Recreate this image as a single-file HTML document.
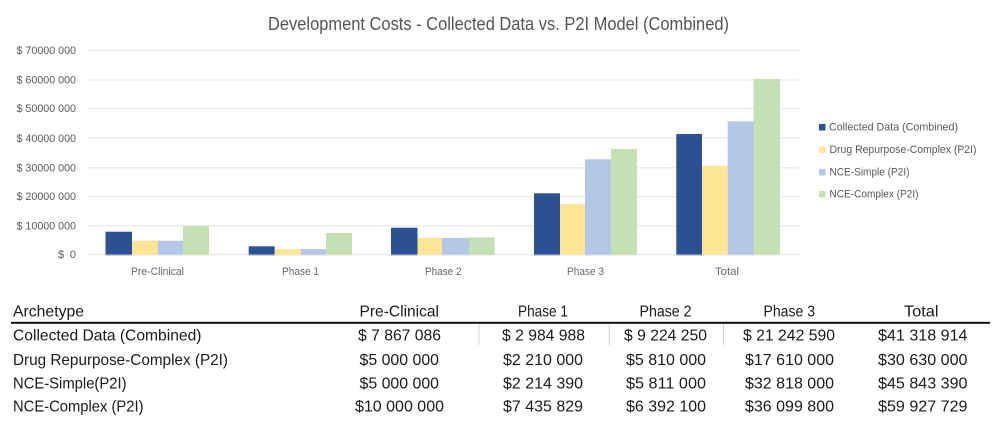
<!DOCTYPE html>
<html>
<head>
<meta charset="utf-8">
<style>
html,body{margin:0;padding:0;background:#fff;width:1000px;height:431px;overflow:hidden}
svg{display:block}
text{font-family:"Liberation Sans",sans-serif}
.t{font-size:18px;fill:#555}
.y{font-size:11px;fill:#595959}
.c{font-size:11px;fill:#666}
.l{font-size:11px;fill:#595959}
.d{font-size:16px;fill:#1a1a1a}
.b{fill:#2b5192}.a{fill:#ffe596}.s{fill:#b4c7e7}.g{fill:#c5e0b4}
</style>
</head>
<body>
<svg width="1000" height="431" viewBox="0 0 1000 431" xmlns="http://www.w3.org/2000/svg">
<text class="t" x="268" y="30" textLength="461" lengthAdjust="spacingAndGlyphs">Development Costs - Collected Data vs. P2I Model (Combined)</text>

<g fill="#e8e8e8">
<rect x="87" y="50" width="712" height="1.2"/>
<rect x="87" y="79.5" width="712" height="1.2"/>
<rect x="87" y="108" width="712" height="1.2"/>
<rect x="87" y="137.2" width="712" height="1.2"/>
<rect x="87" y="167.2" width="712" height="1.2"/>
<rect x="87" y="196" width="712" height="1.2"/>
<rect x="87" y="225.2" width="712" height="1.2"/>
<rect x="87" y="254" width="712" height="1.2"/>
</g>

<g>
<text class="y" x="16.5" y="54" textLength="59.5" lengthAdjust="spacingAndGlyphs">$ 70000 000</text>
<text class="y" x="16.5" y="83.5" textLength="59.5" lengthAdjust="spacingAndGlyphs">$ 60000 000</text>
<text class="y" x="16.5" y="112" textLength="59.5" lengthAdjust="spacingAndGlyphs">$ 50000 000</text>
<text class="y" x="16.5" y="142" textLength="59.5" lengthAdjust="spacingAndGlyphs">$ 40000 000</text>
<text class="y" x="16.5" y="171.5" textLength="59.5" lengthAdjust="spacingAndGlyphs">$ 30000 000</text>
<text class="y" x="16.5" y="200" textLength="59.5" lengthAdjust="spacingAndGlyphs">$ 20000 000</text>
<text class="y" x="16.5" y="229.5" textLength="59.5" lengthAdjust="spacingAndGlyphs">$ 10000 000</text>
<text class="y" x="58" y="258" textLength="18" lengthAdjust="spacing">$ 0</text>
</g>

<g>
<rect class="b" x="105.5" y="231.7" width="26.5" height="23.6"/>
<rect class="a" x="132" y="240.7" width="26" height="14.6"/>
<rect class="s" x="158" y="240.7" width="25" height="14.6"/>
<rect class="g" x="183" y="226.3" width="26" height="29"/>

<rect class="b" x="248.7" y="246.3" width="26" height="9"/>
<rect class="a" x="274.7" y="249" width="26.3" height="6.3"/>
<rect class="s" x="301" y="249" width="25" height="6.3"/>
<rect class="g" x="326" y="233" width="26" height="22.3"/>

<rect class="b" x="391" y="227.7" width="26.5" height="27.6"/>
<rect class="a" x="417.5" y="238" width="24.5" height="17.3"/>
<rect class="s" x="442" y="238" width="27" height="17.3"/>
<rect class="g" x="469" y="237.3" width="25.7" height="18"/>

<rect class="b" x="534" y="193.3" width="26" height="62"/>
<rect class="a" x="560" y="204" width="25" height="51.3"/>
<rect class="s" x="585" y="159.3" width="26" height="96"/>
<rect class="g" x="611" y="149" width="26" height="106.3"/>

<rect class="b" x="676.3" y="134" width="25.7" height="121.3"/>
<rect class="a" x="702" y="166" width="25.7" height="89.3"/>
<rect class="s" x="727.7" y="121.3" width="25.8" height="134"/>
<rect class="g" x="753.5" y="79" width="26.5" height="176.3"/>
<rect x="87" y="254" width="712" height="1.2" fill="#e8e8e8" opacity=".4"/>
</g>

<g>
<text class="c" x="131" y="275" textLength="53" lengthAdjust="spacingAndGlyphs">Pre-Clinical</text>
<text class="c" x="282" y="275" textLength="37" lengthAdjust="spacingAndGlyphs">Phase 1</text>
<text class="c" x="425" y="275" textLength="36.5" lengthAdjust="spacingAndGlyphs">Phase 2</text>
<text class="c" x="567" y="275" textLength="37" lengthAdjust="spacingAndGlyphs">Phase 3</text>
<text class="c" x="715" y="275" textLength="24" lengthAdjust="spacingAndGlyphs">Total</text>
</g>

<g>
<rect class="b" x="819" y="124" width="6.5" height="6.5"/>
<rect class="a" x="819" y="146.5" width="6.5" height="6.5"/>
<rect class="s" x="819" y="169" width="6.5" height="6.5"/>
<rect class="g" x="819" y="191" width="6.5" height="6.5"/>
<text class="l" x="829" y="130.5" textLength="129" lengthAdjust="spacingAndGlyphs">Collected Data (Combined)</text>
<text class="l" x="829.5" y="153" textLength="147" lengthAdjust="spacingAndGlyphs">Drug Repurpose-Complex (P2I)</text>
<text class="l" x="829.5" y="175.5" textLength="80" lengthAdjust="spacingAndGlyphs">NCE-Simple (P2I)</text>
<text class="l" x="829.5" y="197.5" textLength="89" lengthAdjust="spacingAndGlyphs">NCE-Complex (P2I)</text>
</g>

<rect x="11" y="321.8" width="979" height="2" fill="#111"/>
<g fill="#d4d4d4">
<rect x="478.5" y="324" width="1" height="21"/>
<rect x="608.7" y="324" width="1" height="21"/>
<rect x="723" y="324" width="1" height="21"/>
</g>

<g>
<text class="d" x="13" y="316.7" textLength="71" lengthAdjust="spacingAndGlyphs">Archetype</text>
<text class="d" x="359.5" y="316.7" textLength="79.5" lengthAdjust="spacingAndGlyphs">Pre-Clinical</text>
<text class="d" x="518" y="316.7" textLength="50" lengthAdjust="spacingAndGlyphs">Phase 1</text>
<text class="d" x="639.5" y="316.7" textLength="52" lengthAdjust="spacingAndGlyphs">Phase 2</text>
<text class="d" x="763.5" y="316.7" textLength="51.5" lengthAdjust="spacingAndGlyphs">Phase 3</text>
<text class="d" x="904" y="316.7" textLength="34.5" lengthAdjust="spacingAndGlyphs">Total</text>

<text class="d" x="13" y="340.7" textLength="188.5" lengthAdjust="spacingAndGlyphs">Collected Data (Combined)</text>
<text class="d" x="358" y="340.7" textLength="83" lengthAdjust="spacingAndGlyphs">$ 7 867 086</text>
<text class="d" x="502" y="340.7" textLength="83" lengthAdjust="spacingAndGlyphs">$ 2 984 988</text>
<text class="d" x="624" y="340.7" textLength="83" lengthAdjust="spacingAndGlyphs">$ 9 224 250</text>
<text class="d" x="743" y="340.7" textLength="92" lengthAdjust="spacingAndGlyphs">$ 21 242 590</text>
<text class="d" x="878" y="340.7" textLength="89.5" lengthAdjust="spacingAndGlyphs">$41 318 914</text>

<text class="d" x="13" y="365" textLength="215" lengthAdjust="spacingAndGlyphs">Drug Repurpose-Complex (P2I)</text>
<text class="d" x="359.5" y="365" textLength="79.5" lengthAdjust="spacingAndGlyphs">$5 000 000</text>
<text class="d" x="503" y="365" textLength="80" lengthAdjust="spacingAndGlyphs">$2 210 000</text>
<text class="d" x="626" y="365" textLength="80" lengthAdjust="spacingAndGlyphs">$5 810 000</text>
<text class="d" x="745" y="365" textLength="89" lengthAdjust="spacingAndGlyphs">$17 610 000</text>
<text class="d" x="878" y="365" textLength="89.5" lengthAdjust="spacingAndGlyphs">$30 630 000</text>

<text class="d" x="13" y="388.7" textLength="113.5" lengthAdjust="spacingAndGlyphs">NCE-Simple(P2I)</text>
<text class="d" x="359.5" y="388.7" textLength="79.5" lengthAdjust="spacingAndGlyphs">$5 000 000</text>
<text class="d" x="503" y="388.7" textLength="80" lengthAdjust="spacingAndGlyphs">$2 214 390</text>
<text class="d" x="626" y="388.7" textLength="80" lengthAdjust="spacingAndGlyphs">$5 811 000</text>
<text class="d" x="745" y="388.7" textLength="89" lengthAdjust="spacingAndGlyphs">$32 818 000</text>
<text class="d" x="878" y="388.7" textLength="89.5" lengthAdjust="spacingAndGlyphs">$45 843 390</text>

<text class="d" x="13" y="411.7" textLength="130.5" lengthAdjust="spacingAndGlyphs">NCE-Complex (P2I)</text>
<text class="d" x="355" y="411.7" textLength="89" lengthAdjust="spacingAndGlyphs">$10 000 000</text>
<text class="d" x="503" y="411.7" textLength="80" lengthAdjust="spacingAndGlyphs">$7 435 829</text>
<text class="d" x="626" y="411.7" textLength="80" lengthAdjust="spacingAndGlyphs">$6 392 100</text>
<text class="d" x="745" y="411.7" textLength="89" lengthAdjust="spacingAndGlyphs">$36 099 800</text>
<text class="d" x="878" y="411.7" textLength="89.5" lengthAdjust="spacingAndGlyphs">$59 927 729</text>
</g>
</svg>
</body>
</html>
